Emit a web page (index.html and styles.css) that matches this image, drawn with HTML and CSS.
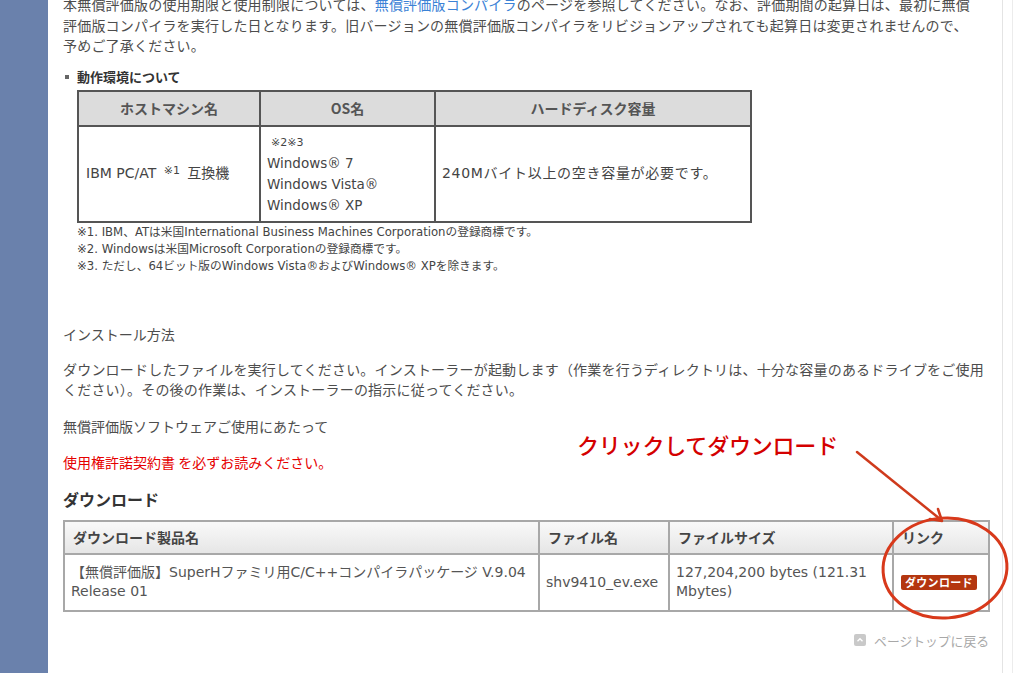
FILE: index.html
```html
<!DOCTYPE html>
<html lang="ja">
<head>
<meta charset="utf-8">
<title>無償評価版ダウンロード</title>
<link rel="stylesheet" href="styles.css">
</head>
<body>
<div class="page">
  <aside class="sidebar"></aside>
  <main class="main">
    <p class="intro">本無償評価版の使用期限と使用制限については、<a class="link" href="#">無償評価版コンパイラ</a>のページを参照してください。なお、評価期間の起算日は、最初に無償<br>評価版コンパイラを実行した日となります。旧バージョンの無償評価版コンパイラをリビジョンアップされても起算日は変更されませんので、<br>予めご了承ください。</p>

    <h4 class="env-title"><span class="sq"></span>動作環境について</h4>
    <table class="env">
      <thead>
        <tr><th class="c1">ホストマシン名</th><th class="c2">OS名</th><th class="c3">ハードディスク容量</th></tr>
      </thead>
      <tbody>
        <tr>
          <td class="host">IBM PC/AT <sup>※1</sup> 互換機</td>
          <td class="os"><span class="small">※2※3</span><br>Windows® 7<br>Windows Vista®<br>Windows® XP</td>
          <td class="hdd">240Mバイト以上の空き容量が必要です。</td>
        </tr>
      </tbody>
    </table>
    <ul class="notes">
      <li>※1. IBM、ATは米国International Business Machines Corporationの登録商標です。</li>
      <li>※2. Windowsは米国Microsoft Corporationの登録商標です。</li>
      <li>※3. ただし、64ビット版のWindows Vista®およびWindows® XPを除きます。</li>
    </ul>

    <p class="install-title">インストール方法</p>
    <p class="para">ダウンロードしたファイルを実行してください。インストーラーが起動します（作業を行うディレクトリは、十分な容量のあるドライブをご使用ください）。その後の作業は、インストーラーの指示に従ってください。</p>
    <p class="para2">無償評価版ソフトウェアご使用にあたって</p>
    <p class="warn">使用権許諾契約書 を必ずお読みください。</p>

    <h3 class="dl-title">ダウンロード</h3>
    <table class="dl">
      <colgroup>
        <col class="w1"><col class="w2"><col class="w3"><col class="w4">
      </colgroup>
      <thead>
        <tr><th>ダウンロード製品名</th><th>ファイル名</th><th>ファイルサイズ</th><th>リンク</th></tr>
      </thead>
      <tbody>
        <tr>
          <td>【無償評価版】SuperHファミリ用C/C++コンパイラパッケージ V.9.04<br>Release 01</td>
          <td>shv9410_ev.exe</td>
          <td>127,204,200 bytes (121.31<br>Mbytes)</td>
          <td><a class="btn" href="#">ダウンロード</a></td>
        </tr>
      </tbody>
    </table>
    <div class="pagetop">
      <span class="pt-icon"><svg width="12" height="12" viewBox="0 0 12 12"><path d="M3.5 7.2 L6 4.8 L8.5 7.2" fill="none" stroke="#fff" stroke-width="1.4"/></svg></span>
      <span>ページトップに戻る</span>
    </div>
  </main>
  <div class="rightstrip"></div>
</div>

<div class="callout">クリックしてダウンロード</div>
<svg class="overlay" width="1024" height="673" viewBox="0 0 1024 673">
  <line x1="857" y1="452" x2="940" y2="519" stroke="#cf3a1c" stroke-width="2.5" stroke-linecap="round"/>
  <path d="M930 519 L942 521 L938 509" fill="none" stroke="#cf3a1c" stroke-width="2.5" stroke-linecap="round" stroke-linejoin="round"/>
  <ellipse cx="945" cy="568" rx="62" ry="50" fill="none" stroke="#d8391b" stroke-width="3" transform="rotate(-4 945 568)"/>
</svg>
</body>
</html>
```

FILE: styles.css
```css
html, body {
  margin: 0;
  padding: 0;
  background: #fff;
  overflow: hidden;
}
body {
  width: 1024px;
  height: 673px;
  position: relative;
  font-family: "Noto Sans CJK JP", sans-serif;
  color: #4d4d4d;
}
.page {
  display: flex;
  height: 673px;
}
.sidebar {
  width: 48px;
  flex: none;
  background: #6a81ac;
}
.main {
  width: 939px;
  flex: none;
  padding: 0 0 0 15px;
  border-right: 1px solid #e4e4e4;
}
.rightstrip {
  width: 9px;
  flex: none;
  border-right: 1px solid #ececec;
}
p { margin: 0; }
.intro {
  margin-top: -6px;
  font-size: 14px;
  line-height: 20.5px;
  letter-spacing: 0.2px;
  white-space: nowrap;
}
.link { color: #3b82d6; text-decoration: none; }

.env-title {
  margin: 12px 0 0 2px;
  font-size: 13px;
  line-height: 18px;
  font-weight: bold;
  color: #333;
  display: flex;
  align-items: center;
}
.sq {
  display: inline-block;
  width: 4px;
  height: 4px;
  background: #666;
  margin-right: 8px;
}
.env {
  margin: 4px 0 0 14px;
  border-collapse: collapse;
  font-family: "DejaVu Sans", "Noto Sans CJK JP", sans-serif;
  font-size: 13.5px;
  color: #444;
}
.env th, .env td {
  border: 2px solid #555;
}
.env th {
  background: #dcdcdc;
  height: 33px;
  padding: 0;
  font-family: "Noto Sans CJK JP", sans-serif;
  font-size: 14px;
  color: #555;
  font-weight: bold;
}
.env .c1 { width: 180px; }
.env .c2 { width: 173px; }
.env .c3 { width: 314px; }
.env td {
  height: 94px;
  padding: 0 6px;
  line-height: 21px;
  vertical-align: middle;
}
.env .host { font-size: 14px; padding-left: 7px; }
.env .host sup { margin: 0 3px; }
.env .hdd { font-size: 14px; letter-spacing: 0.7px; }
.env sup { font-size: 11px; vertical-align: 4px; line-height: 0; }
.env .small { font-size: 11px; padding-left: 4px; }

.notes {
  list-style: none;
  margin: 1px 0 0 14px;
  padding: 0;
  font-family: "DejaVu Sans", "Noto Sans CJK JP", sans-serif;
  font-size: 11.7px;
  line-height: 17px;
  color: #444;
}

.install-title {
  margin-top: 50px;
  font-size: 14px;
  line-height: 19.6px;
}
.para {
  margin-top: 16px;
  font-size: 14px;
  line-height: 19.4px;
  letter-spacing: 0.2px;
  padding-right: 10px;
}
.para2 {
  margin-top: 18px;
  font-size: 14px;
  line-height: 19.6px;
}
.warn {
  margin-top: 16.5px;
  font-size: 14px;
  line-height: 19.6px;
  color: #e60000;
}
.dl-title {
  margin: 15px 0 0 0;
  font-size: 16px;
  line-height: 22px;
  font-weight: bold;
  color: #333;
}
.dl {
  margin-top: 10px;
  width: 925px;
  table-layout: fixed;
  border-collapse: collapse;
  font-family: "DejaVu Sans", "Noto Sans CJK JP", sans-serif;
  font-size: 14px;
  color: #555;
}
.dl .w1 { width: 475px; }
.dl .w2 { width: 130px; }
.dl .w3 { width: 224px; }
.dl .w4 { width: 96px; }
.dl th, .dl td {
  border: 2px solid #a8a8a8;
  text-align: left;
}
.dl th {
  height: 31px;
  padding: 0 8px;
  background: linear-gradient(to bottom, #f9f9f9, #e6e6e6);
  font-family: "Noto Sans CJK JP", sans-serif;
  font-weight: bold;
  color: #444;
}
.dl td {
  height: 55px;
  padding: 0 6px;
  line-height: 19px;
  vertical-align: middle;
}
.btn {
  display: inline-block;
  white-space: nowrap;
  background: #b4360f;
  color: #fff;
  font-family: "Noto Sans CJK JP", sans-serif;
  font-size: 11px;
  font-weight: bold;
  line-height: 15px;
  padding: 0 4px;
  margin-left: 1px;
  border-radius: 2px;
  text-decoration: none;
  letter-spacing: 0.3px;
}
.pagetop {
  margin: 19px 13px 0 0;
  display: flex;
  justify-content: flex-end;
  align-items: center;
  gap: 8px;
  font-size: 12.8px;
  color: #a8a8a8;
}
.pt-icon {
  width: 12px;
  height: 12px;
  background: #c9c9c9;
  border-radius: 2px;
  display: inline-flex;
}
.callout {
  position: absolute;
  left: 577px;
  top: 429px;
  font-size: 22px;
  line-height: 30px;
  color: #d40000;
  font-weight: 500;
  letter-spacing: -0.2px;
}
.overlay {
  position: absolute;
  left: 0;
  top: 0;
  pointer-events: none;
}
```
